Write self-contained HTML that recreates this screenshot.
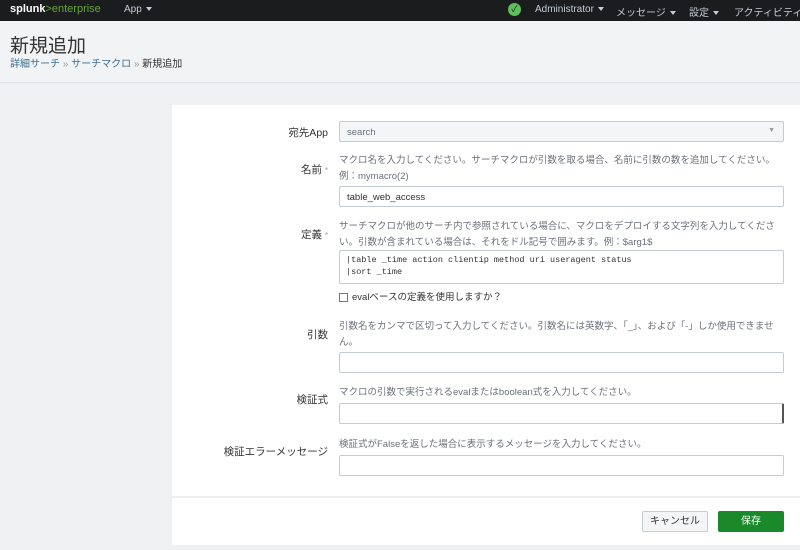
<!DOCTYPE html>
<html><head><meta charset="utf-8"><style>
*{box-sizing:border-box;margin:0;padding:0}
body{width:800px;height:550px;overflow:hidden;background:#eff0f2;font-family:"Liberation Sans","Noto Sans CJK JP",sans-serif;position:relative;color:#333}
.top{position:absolute;left:0;top:0;width:800px;height:21px;background:#1a1c1e;color:#c3cbd4;font-size:10px}
.top span{position:absolute;top:4px;white-space:nowrap}
.hdr{position:absolute;left:0;top:21px;width:800px;height:62px;background:#f2f3f5;border-bottom:1px solid #e1e3e6}
.a{position:absolute;white-space:nowrap}
.panel{position:absolute;left:172px;top:105px;width:628px;height:440px;background:#fff}
.lbl{position:absolute;right:472px;font-size:10.5px;color:#333;white-space:nowrap;text-align:right}
.hint{position:absolute;left:167px;font-size:9.5px;color:#6b7079;white-space:nowrap;line-height:16px}
.in{position:absolute;left:167px;width:445px;background:#fff;border:1px solid #c3cbd4;border-radius:2px;font-size:9.5px;color:#333;padding:5px 7px}
.tri{display:inline-block;border-left:3px solid transparent;border-right:3px solid transparent;border-top:4px solid #c3cbd4;vertical-align:middle;margin-left:4px}
</style></head><body>
<div class="top">
<span style="left:10px;top:3px;color:#fff;font-weight:bold;font-size:11px">splunk<span style="position:static;color:#65a637;font-weight:normal">&gt;enterprise</span></span>
<span style="left:124px">App<i class="tri"></i></span>
<span style="left:508px;top:3px;width:13px;height:13px;border-radius:50%;background:#5cc05c;color:#1a1c1e;font-size:9px;text-align:center;line-height:13px">✓</span>
<span style="left:535px">Administrator<i class="tri"></i></span>
<span style="left:616px">メッセージ<i class="tri"></i></span>
<span style="left:689px">設定<i class="tri"></i></span>
<span style="left:734px">アクティビティ</span>
</div>
<div class="hdr">
<div class="a" style="left:10px;top:10px;font-size:19px;color:#333">新規追加</div>
<div class="a" style="left:10px;top:34px;font-size:10px;color:#1e93c6"><span style="color:#3c6d93">詳細サーチ</span> <span style="color:#999">»</span> <span style="color:#3c6d93">サーチマクロ</span> <span style="color:#999">»</span> <span style="color:#333">新規追加</span></div>
</div>
<div class="panel">
<div class="lbl" style="top:20px">宛先App</div>
<div class="in" style="top:16px;height:21px;background:#f4f5f7;color:#6b7079">search<span style="position:absolute;right:8px;top:5px;font-size:7px;color:#999">▼</span></div>
<div class="lbl" style="top:57px">名前 <span style="color:#999;font-size:8px">*</span></div>
<div class="hint" style="top:48px">マクロ名を入力してください。サーチマクロが引数を取る場合、名前に引数の数を追加してください。<br>例：mymacro(2)</div>
<div class="in" style="top:81px;height:21px">table_web_access</div>
<div class="lbl" style="top:122px">定義 <span style="color:#999;font-size:8px">*</span></div>
<div class="hint" style="top:114px">サーチマクロが他のサーチ内で参照されている場合に、マクロをデプロイする文字列を入力してくださ<br>い。引数が含まれている場合は、それをドル記号で囲みます。例：$arg1$</div>
<div class="in" style="top:145px;height:34px;font-family:'Liberation Mono',monospace;font-size:8.5px;line-height:12px;padding:3px 6px">|table _time action clientip method uri useragent status<br>|sort _time</div>
<div class="a" style="left:167px;top:188px;width:9px;height:9px;border:1px solid #777"></div>
<div class="hint" style="top:185px;left:180px;color:#333">evalベースの定義を使用しますか？</div>
<div class="lbl" style="top:222px">引数</div>
<div class="hint" style="top:214px">引数名をカンマで区切って入力してください。引数名には英数字、「_」、および「-」しか使用できませ<br>ん。</div>
<div class="in" style="top:247px;height:21px"></div>
<div class="lbl" style="top:287px">検証式</div>
<div class="hint" style="top:280px">マクロの引数で実行されるevalまたはboolean式を入力してください。</div>
<div class="in" style="top:298px;height:21px;border-right:2px solid #555"></div>
<div class="lbl" style="top:339px">検証エラーメッセージ</div>
<div class="hint" style="top:332px">検証式がFalseを返した場合に表示するメッセージを入力してください。</div>
<div class="in" style="top:350px;height:21px"></div>
<div class="a" style="left:0;top:391px;width:628px;height:2px;background:#eff0f2"></div>
<div class="a" style="left:470px;top:406px;width:66px;height:21px;border:1px solid #c3cbd4;background:#f4f5f7;border-radius:2px;font-size:10px;text-align:center;line-height:19px;color:#333">キャンセル</div>
<div class="a" style="left:546px;top:406px;width:66px;height:21px;background:#1a8929;border-radius:2px;font-size:10px;text-align:center;line-height:21px;color:#fff">保存</div>
</div>
</body></html>
